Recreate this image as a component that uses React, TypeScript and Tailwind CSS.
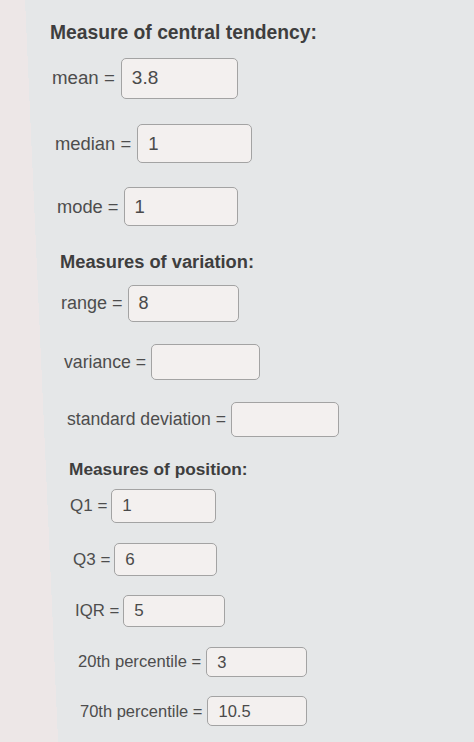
import React from "react";

type Row = {
  label: string;
  value: string;
  row: string;
  box: string;
  text: string;
};

const Box = ({ value, box }: { value: string; box: string }) => (
  <div
    className={`flex h-full items-center rounded-[5px] border border-[#a3a3a3] bg-[#f3f0ef] pl-[10px] text-[#4a4a4a] ${box}`}
  >
    {value}
  </div>
);

const Field = ({ r }: { r: Row }) => (
  <div className={`flex items-center ${r.row}`}>
    <span className={`whitespace-nowrap text-[#4d4d4d] ${r.text}`}>{r.label}</span>
    <Box value={r.value} box={r.box} />
  </div>
);

const central: Row[] = [
  { label: "mean =", value: "3.8", row: "mt-[13px] h-[41px] pl-[52px] gap-[6px]", box: "w-[117px] text-[19px]", text: "text-[18.7px]" },
  { label: "median =", value: "1", row: "mt-[25px] h-[39px] pl-[55px] gap-[6px]", box: "w-[115px] text-[18.5px]", text: "text-[18.4px]" },
  { label: "mode =", value: "1", row: "mt-[24px] h-[39px] pl-[57px] gap-[5px]", box: "w-[114px] text-[18.5px]", text: "text-[18.3px]" },
];

const variation: Row[] = [
  { label: "range =", value: "8", row: "mt-[11px] h-[37px] pl-[61px] gap-[5px]", box: "w-[111px] text-[18px]", text: "text-[18px]" },
  { label: "variance =", value: "", row: "mt-[22px] h-[36px] pl-[64px] gap-[5px]", box: "w-[109px] text-[18px]", text: "text-[17.7px]" },
  { label: "standard deviation =", value: "", row: "mt-[22px] h-[35px] pl-[67px] gap-[5px]", box: "w-[108px] text-[18px]", text: "text-[17.6px]" },
];

const position: Row[] = [
  { label: "Q1 =", value: "1", row: "mt-[9px] h-[34px] pl-[70px] gap-[4px]", box: "w-[105px] text-[17px]", text: "text-[17px]" },
  { label: "Q3 =", value: "6", row: "mt-[20px] h-[33px] pl-[73px] gap-[4px]", box: "w-[103px] text-[17px]", text: "text-[17px]" },
  { label: "IQR =", value: "5", row: "mt-[19px] h-[32px] pl-[75px] gap-[4px]", box: "w-[102px] text-[17px]", text: "text-[16.8px]" },
  { label: "20th percentile =", value: "3", row: "mt-[20px] h-[30px] pl-[78px] gap-[5px]", box: "w-[101px] text-[16.5px]", text: "text-[16.6px]" },
  { label: "70th percentile =", value: "10.5", row: "mt-[19px] h-[30px] pl-[80px] gap-[5px]", box: "w-[100px] text-[16.5px]", text: "text-[16.5px]" },
];

export default function App() {
  return (
    <div
      className="flex h-[742px] w-[474px] flex-col overflow-hidden bg-[linear-gradient(87.45deg,#ede7e7_58px,#e5e7e8_58px)]"
      style={{ fontFamily: '"Liberation Sans", Arial, sans-serif' }}
    >
      <h1 className="mt-[21px] h-[24px] pl-[50px] text-[19.3px] font-bold leading-[24px] text-[#3e3e3e]">
        Measure of central tendency:
      </h1>
      {central.map((r) => (
        <Field key={r.label} r={r} />
      ))}
      <h2 className="mt-[24px] h-[24px] pl-[60px] text-[18.3px] font-bold leading-[24px] text-[#3e3e3e]">
        Measures of variation:
      </h2>
      {variation.map((r) => (
        <Field key={r.label} r={r} />
      ))}
      <h2 className="mt-[21px] h-[22px] pl-[69px] text-[17.3px] font-bold leading-[22px] text-[#3e3e3e]">
        Measures of position:
      </h2>
      {position.map((r) => (
        <Field key={r.label} r={r} />
      ))}
    </div>
  );
}
